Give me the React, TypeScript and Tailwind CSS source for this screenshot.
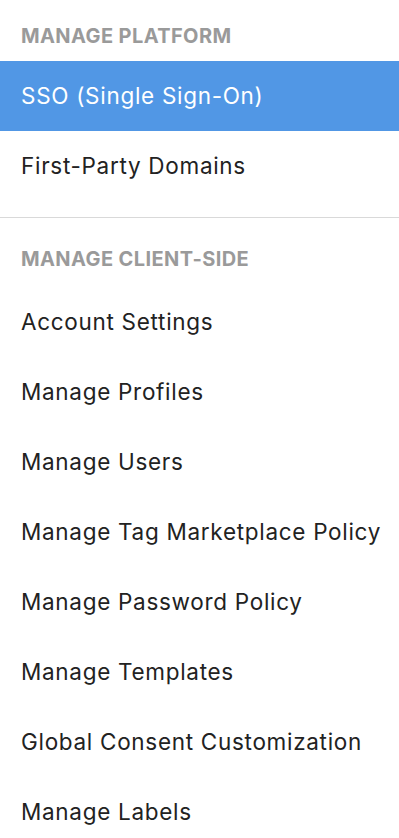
import React from "react";

const platform = ["SSO (Single Sign-On)", "First-Party Domains"];
const client = [
  "Account Settings",
  "Manage Profiles",
  "Manage Users",
  "Manage Tag Marketplace Policy",
  "Manage Password Policy",
  "Manage Templates",
  "Global Consent Customization",
  "Manage Labels",
];

export default function App() {
  return (
    <div className="w-[399px] h-[838px] overflow-hidden bg-white" style={{ fontFamily: "Inter, 'Noto Sans', sans-serif" }}>
      <div className="h-[61px] pt-[24px] px-[21px] text-[20px] leading-[24px] font-bold tracking-[0.4px] text-[#9a9a9a] whitespace-nowrap">
        MANAGE PLATFORM
      </div>
      {platform.map((t, i) => (
        <div
          key={t}
          className={
            i === 0
              ? "h-[70px] flex items-center px-[21px] text-[22.5px] tracking-[0.7px] whitespace-nowrap bg-[#5197e5] text-white"
              : "h-[70px] flex items-center px-[21px] text-[22.5px] tracking-[0.7px] whitespace-nowrap text-[#222222]"
          }
        >
          {t}
        </div>
      ))}
      <div className="mt-[16px] h-px bg-[#d9d9d9]" />
      <div className="h-[69px] pt-[29px] px-[21px] text-[20px] leading-[24px] font-bold tracking-[0.4px] text-[#9a9a9a] whitespace-nowrap">
        MANAGE CLIENT-SIDE
      </div>
      {client.map((t) => (
        <div key={t} className="h-[70px] flex items-center px-[21px] text-[22.5px] tracking-[0.7px] whitespace-nowrap text-[#222222]">
          {t}
        </div>
      ))}
    </div>
  );
}
